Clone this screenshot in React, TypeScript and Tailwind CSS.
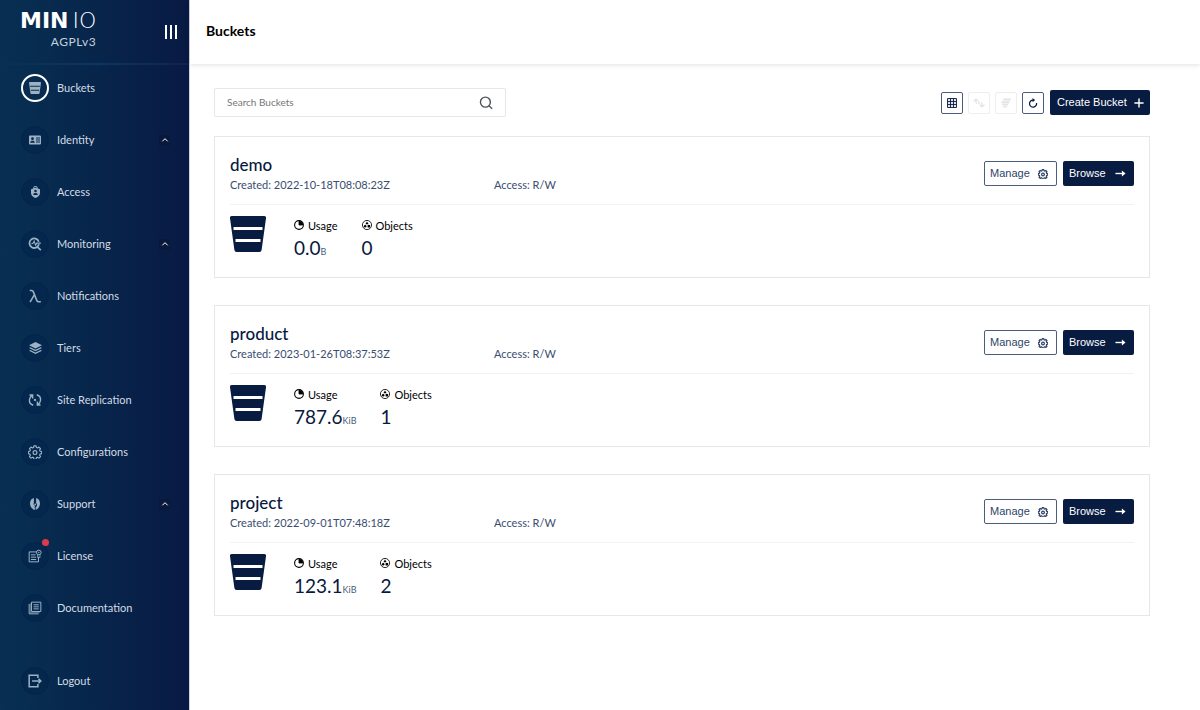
// Buckets page of the object store console: dark navigation rail on the left,
// page header, toolbar and one card per bucket on the right.

import type { ReactNode } from 'react';

interface Bucket {
    name: string;
    created: string;
    access: string;
    usage: string;
    unit: string;
    objects: number;
}

const BUCKETS: Bucket[] = [
    {
        name: 'demo',
        created: '2022-10-18T08:08:23Z',
        access: 'R/W',
        usage: '0.0',
        unit: 'B',
        objects: 0,
    },
    {
        name: 'product',
        created: '2023-01-26T08:37:53Z',
        access: 'R/W',
        usage: '787.6',
        unit: 'KiB',
        objects: 1,
    },
    {
        name: 'project',
        created: '2022-09-01T07:48:18Z',
        access: 'R/W',
        usage: '123.1',
        unit: 'KiB',
        objects: 2,
    },
];

interface IconProps {
    className?: string;
    children?: ReactNode;
}

/** 24-unit outline icon, used as the base of the line drawings below. */
function LineIcon({ className = 'size-3.5', children }: IconProps) {
    return (
        <svg
            viewBox="0 0 24 24"
            className={className}
            fill="none"
            stroke="currentColor"
            strokeWidth="2"
            aria-hidden="true"
        >
            {children}
        </svg>
    );
}

/** Solid bucket with two slots that stop just short of its sides. */
function BucketIcon({ className = 'size-3' }: IconProps) {
    return (
        <svg
            viewBox="0 0 36 36"
            className={className}
            fill="currentColor"
            fillRule="evenodd"
            aria-hidden="true"
        >
            <path d="M2 0h32a2 2 0 0 1 2 2.300L31.600 34a2.200 2.200 0 0 1-2.200 2H6.600a2.200 2.200 0 0 1-2.200-2L0 2.300A2 2 0 0 1 2 0zM3.500 11v3h29v-3zM5.500 23v3h25v-3z" />
        </svg>
    );
}

function IdentityIcon() {
    return (
        <svg
            viewBox="0 0 24 18"
            className="h-2.5 w-3"
            fill="currentColor"
            fillRule="evenodd"
            aria-hidden="true"
        >
            <path d="M2 0h20a2 2 0 0 1 2 2v14a2 2 0 0 1-2 2H2a2 2 0 0 1-2-2V2a2 2 0 0 1 2-2zM7 3.500a2.800 2.800 0 1 0 0 5.600 2.800 2.800 0 0 0 0-5.600zM2.500 14.500h9c0-3-2-4-4.500-4s-4.500 1-4.500 4zM14 4v2h8V4zM14 8v2h8V8zM14 12v2h8v-2z" />
        </svg>
    );
}

function AccessIcon() {
    return (
        <svg
            viewBox="0 0 18 24"
            className="h-3 w-[9px]"
            fill="currentColor"
            fillRule="evenodd"
            aria-hidden="true"
        >
            <path d="M4.500 5C4.500 1.500 6.500 0 9 0s4.500 1.500 4.500 5L18 6.500V14c0 5-4 8-9 10-5-2-9-5-9-10V6.500zM6.500 4.400L9 3.500l2.500.9C11.500 2.700 10.500 2 9 2s-2.500.7-2.500 2.400zM9 7.500a2.600 2.600 0 1 0 0 5.200 2.600 2.600 0 0 0 0-5.200zM4.500 18h9c0-3-2-4-4.500-4s-4.500 1-4.500 4z" />
        </svg>
    );
}

function MonitoringIcon() {
    return (
        <LineIcon>
            <path
                d="M18.700 12.500A8.200 8.200 0 1 1 18.500 8M16 17l6 5.500"
                strokeWidth="3"
            />
            <path d="M6 11h2.500l2-4 2.500 7 2-3.500h7" strokeWidth="1.800" />
        </LineIcon>
    );
}

function LambdaIcon() {
    return (
        <LineIcon>
            <path
                d="M3 2.500h3.500c1.500 0 2 .8 2.500 2l6 15c.7 1.800 1.500 2.500 3 2.500h4M11 9.500L3.500 22.500"
                strokeWidth="2.600"
            />
        </LineIcon>
    );
}

function TiersIcon() {
    return (
        <svg
            viewBox="0 0 26 24"
            className="h-3 w-[13px]"
            fill="currentColor"
            aria-hidden="true"
        >
            <path d="M13 0l13 6.500L13 13 0 6.500z" />
            <path d="M2.500 10.500L13 15.700l10.500-5.200L26 12l-13 6.500L0 12z" />
            <path d="M2.500 16L13 21.200 23.500 16l2.500 1.300L13 24 0 17.300z" />
        </svg>
    );
}

function ReplicationIcon() {
    return (
        <LineIcon>
            <path
                d="M9 21C4.500 19.500 2 16 2.500 11.500 2.800 9 4 6.500 6.500 4.500M2.500 3.500h5.500V9.500"
                strokeWidth="2.400"
            />
            <path
                d="M15 3c4.500 1.500 7 5 6.500 9.500-.3 2.500-1.500 5-4 7M21.500 20.500H16V14.500"
                strokeWidth="2.400"
            />
            <circle cx="12" cy="12" r="2" fill="currentColor" stroke="none" />
        </LineIcon>
    );
}

interface GearProps {
    className?: string;
    weight?: string;
}

function GearIcon({ className = 'size-3.5', weight = '2' }: GearProps) {
    return (
        <LineIcon className={className}>
            <path
                d="M10.100 1.500h3.800l.6 2.800 1.900.8 2.400-1.600 2.700 2.700-1.600 2.400.8 1.900 2.800.6v3.800l-2.800.6-.8 1.900 1.600 2.400-2.700 2.700-2.400-1.600-1.900.8-.6 2.800h-3.800l-.6-2.800-1.900-.8-2.400 1.600-2.700-2.700 1.600-2.400-.8-1.900-2.800-.6v-3.800l2.800-.6.8-1.900-1.600-2.400 2.700-2.700 2.400 1.600 1.900-.8z"
                strokeWidth={weight}
                strokeLinejoin="round"
            />
            <circle cx="12" cy="13" r="3.300" strokeWidth={weight} />
        </LineIcon>
    );
}

function SupportIcon() {
    return (
        <svg
            viewBox="0 0 22 26"
            className="h-3 w-2.5"
            fill="currentColor"
            aria-hidden="true"
        >
            <path d="M8.500 0v11l-1 2.500 3.500 4-1 3 1.500 4.500c-1 .8-2 1-3 .5C3.500 23 0 18 0 12 0 6 3.500 1 8.500 0z" />
            <path d="M13.500 0c5 1 8.500 6 8.500 12 0 6.500-3.500 11.500-9 13.500l-1-4.500 3-3.500.5-4-2-2.500z" />
            <circle cx="11.500" cy="14" r="2" />
        </svg>
    );
}

function LicenseIcon() {
    return (
        <LineIcon>
            <path d="M15 5H2v17h16v-8M5 10h8M5 14h9M5 18h9" strokeWidth="1.700" />
            <circle cx="18.500" cy="6" r="4" strokeWidth="1.700" />
            <path d="M16.500 10v5l2-1.300 2 1.300v-5" strokeWidth="1.300" />
            <circle cx="18.500" cy="6" r="1.200" fill="currentColor" stroke="none" />
        </LineIcon>
    );
}

function DocumentationIcon() {
    return (
        <LineIcon>
            <path
                d="M6 2h16v16H6zM2 5v17h16M9.500 6.500h9M9.500 10h9M9.500 13.500h9"
                strokeWidth="1.700"
            />
            <path d="M4 4v16h16" strokeWidth="1" />
        </LineIcon>
    );
}

function LogoutIcon() {
    return (
        <LineIcon>
            <path
                d="M17 7V2H2v20h15v-5M7 12h15M18 8l4 4-4 4"
                strokeWidth="2.600"
            />
        </LineIcon>
    );
}

interface NavEntry {
    label: string;
    icon: ReactNode;
    active?: boolean;
    expandable?: boolean;
    alert?: boolean;
}

const NAV: NavEntry[] = [
    { label: 'Buckets', icon: <BucketIcon />, active: true },
    { label: 'Identity', icon: <IdentityIcon />, expandable: true },
    { label: 'Access', icon: <AccessIcon /> },
    { label: 'Monitoring', icon: <MonitoringIcon />, expandable: true },
    { label: 'Notifications', icon: <LambdaIcon /> },
    { label: 'Tiers', icon: <TiersIcon /> },
    { label: 'Site Replication', icon: <ReplicationIcon /> },
    { label: 'Configurations', icon: <GearIcon /> },
    { label: 'Support', icon: <SupportIcon />, expandable: true },
    { label: 'License', icon: <LicenseIcon />, alert: true },
    { label: 'Documentation', icon: <DocumentationIcon /> },
];

function NavItem({ label, icon, active, expandable, alert }: NavEntry) {
    return (
        <a
            href="#"
            className="flex h-[52px] items-center gap-2 pr-[19px] pl-[21px] text-[11px] text-[#d3dce6]"
        >
            <span
                className={`relative flex size-7 items-center justify-center rounded-full text-[#9db1c4] ${
                    active
                        ? 'border-2 border-white'
                        : 'border border-[#05234a] bg-[#03274d]'
                }`}
            >
                {icon}
                {alert && (
                    <span className="absolute -top-1 -right-px size-[7px] rounded-full bg-[#dc3a4f]" />
                )}
            </span>
            <span className="flex-1">{label}</span>
            {expandable && (
                <span className="flex size-[11px] items-center justify-center bg-[#08193c] text-white">
                    <LineIcon className="size-2">
                        <path d="M4 16l8-8 8 8" strokeWidth="3" />
                    </LineIcon>
                </span>
            )}
        </a>
    );
}

function Sidebar() {
    return (
        <aside className="flex w-[190px] shrink-0 flex-col border-r border-[#cfd5de] bg-linear-to-r from-[#073052] to-[#081a44]">
            <div className="flex h-[63px] items-start justify-between pr-3 pl-5">
                <div className="flex flex-col items-end pt-[11px] text-white">
                    <div className="flex items-center gap-1 leading-5">
                        <span className="font-['DejaVu_Sans'] text-[22px] font-bold">
                            MIN
                        </span>
                        <span className="font-['DejaVu_Sans'] text-[22px] font-extralight">
                            IO
                        </span>
                    </div>
                    <span className="text-[12px] leading-[22px] tracking-wider text-[#c3d0de]">
                        AGPLv3
                    </span>
                </div>
                <button
                    type="button"
                    aria-label="Collapse menu"
                    className="mt-[25px] flex h-3.5 gap-[3px]"
                >
                    <span className="h-full w-0.5 bg-white" />
                    <span className="h-full w-0.5 bg-white" />
                    <span className="h-full w-0.5 bg-white" />
                </button>
            </div>
            <div className="h-0.5 w-full bg-linear-to-r from-[#073052] via-[#0f3562] to-[#0c2450]" />
            <nav className="-mt-[3px] flex flex-1 flex-col justify-between pb-[3px]">
                <div>
                    {NAV.map((entry) => (
                        <NavItem key={entry.label} {...entry} />
                    ))}
                </div>
                <NavItem label="Logout" icon={<LogoutIcon />} />
            </nav>
        </aside>
    );
}

interface ToolButtonProps {
    label: string;
    disabled?: boolean;
    children: ReactNode;
}

function ToolButton({ label, disabled = false, children }: ToolButtonProps) {
    return (
        <button
            type="button"
            aria-label={label}
            disabled={disabled}
            className="flex size-[22px] items-center justify-center rounded-xs border border-[#4b5c7c] text-[#081c42] disabled:border-[#eeeeee] disabled:text-[#e4e4e4]"
        >
            {children}
        </button>
    );
}

function Toolbar() {
    return (
        <div className="flex items-center justify-between">
            <label className="flex h-[29px] w-[292px] items-center rounded-xs border border-[#e5e7e9] px-3">
                <input
                    type="search"
                    placeholder="Search Buckets"
                    aria-label="Search Buckets"
                    className="min-w-0 flex-1 text-[10px] text-[#07193e] outline-none placeholder:text-[#767676]"
                />
                <LineIcon className="size-3.5 text-[#4f5257]">
                    <circle cx="11" cy="10.500" r="8.500" strokeWidth="2.400" />
                    <path d="M17 16.500l5.500 5.500" strokeWidth="2.400" />
                </LineIcon>
            </label>
            <div className="flex items-center gap-1.5">
                <div className="flex items-center gap-[5px]">
                    <ToolButton label="Select all">
                        <svg
                            viewBox="0 0 10 10"
                            className="size-2.5"
                            fill="none"
                            stroke="currentColor"
                            strokeWidth="0.900"
                            aria-hidden="true"
                        >
                            <path d="M.5.5h9v9h-9zM3.500.5v9M6.500.5v9M.5 3.500h9M.5 6.500h9" />
                            <path
                                d="M1.500 2h1M4.500 2h1M7.500 2h1M1.500 5h1M4.500 5h1M7.500 5h1M1.500 8h1M4.500 8h1M7.500 8h1"
                                opacity="0.600"
                            />
                        </svg>
                    </ToolButton>
                    <ToolButton label="Set lifecycle" disabled>
                        <LineIcon className="size-3">
                            <path
                                d="M1 9l5-5 5 5M6 4v7c0 1.500 1 2 2.500 2M13 15l5 5 5-5M18 20v-7c0-1.500-1-2-2.500-2"
                                strokeWidth="2.400"
                            />
                            <circle cx="12" cy="12" r="2" fill="currentColor" stroke="none" />
                        </LineIcon>
                    </ToolButton>
                    <ToolButton label="Set replication" disabled>
                        <svg
                            viewBox="0 0 24 24"
                            className="size-2.5"
                            fill="currentColor"
                            aria-hidden="true"
                        >
                            <path d="M5 1h19l-1 5H5.500zM1 7.500h20l-1 5H1.500zM3 14h15l-1 4H3.500zM4 19.500h11L14 23H5z" />
                        </svg>
                    </ToolButton>
                    <ToolButton label="Refresh">
                        <LineIcon className="size-2.5">
                            <path
                                d="M20.500 12A8.500 8.500 0 1 1 12 5h2"
                                strokeWidth="3"
                            />
                            <path d="M11 0l6 5-6 5z" fill="currentColor" stroke="none" />
                        </LineIcon>
                    </ToolButton>
                </div>
                <button
                    type="button"
                    className="flex h-[25px] w-[100px] items-center justify-between rounded-xs bg-[#081c42] pr-1.5 pl-[7px] font-['Liberation_Sans',sans-serif] text-[11px] text-white"
                >
                    Create Bucket
                    <LineIcon className="size-2.5">
                        <path d="M12 1v22M1 12h22" strokeWidth="3.400" />
                    </LineIcon>
                </button>
            </div>
        </div>
    );
}

function BucketCard({ name, created, access, usage, unit, objects }: Bucket) {
    return (
        <article className="border border-[#e5e7e8] px-[15px] pt-[17px] pb-[11px]">
            <div className="flex items-start justify-between border-b border-[#f1f2f2] pb-2.5">
                <div>
                    <h2 className="text-[17px] leading-[22px] font-medium text-[#07193e]">
                        {name}
                    </h2>
                    <div className="flex text-[11px] leading-[18px] text-[#3a4d70]">
                        <p className="w-[264px]">Created: {created}</p>
                        <p>Access: {access}</p>
                    </div>
                </div>
                <div className="flex gap-1.5 pt-[7px] font-['Liberation_Sans',sans-serif] text-[11px]">
                    <button
                        type="button"
                        className="flex h-[25px] w-[73px] items-center justify-between rounded-xs border border-[#4b5c7c] pr-2 pl-[5px] text-[#2f4468]"
                    >
                        Manage
                        <GearIcon className="size-2.5" weight="3" />
                    </button>
                    <button
                        type="button"
                        className="flex h-[25px] w-[71px] items-center justify-between rounded-xs bg-[#081c42] pr-2 pl-1.5 text-white"
                    >
                        Browse
                        <LineIcon className="size-[11px]">
                            <path d="M1 12h17" strokeWidth="3" />
                            <path d="M15 5.500l8 6.500-8 6.500z" fill="currentColor" stroke="none" />
                        </LineIcon>
                    </button>
                </div>
            </div>
            <div className="flex pt-[11px]">
                <BucketIcon className="size-9 text-[#081c42]" />
                <dl className="ml-7 flex gap-6 pt-0.5">
                    <div>
                        <dt className="flex items-center gap-1 text-[11px] leading-4 text-black">
                            <LineIcon className="mb-0.5 size-2.5">
                                <circle cx="12" cy="12" r="10.500" strokeWidth="2.600" />
                                <path d="M12 3v9h9a9 9 0 0 0-9-9z" fill="currentColor" />
                            </LineIcon>
                            Usage
                        </dt>
                        <dd className="text-[19px] leading-7 text-[#07193e]">
                            {usage}
                            <span className="text-[9px] text-[#4b5c7c]">{unit}</span>
                        </dd>
                    </div>
                    <div>
                        <dt className="flex items-center gap-1 text-[11px] leading-4 text-black">
                            <LineIcon className="mb-0.5 size-2.5">
                                <circle cx="12" cy="12" r="11" />
                                <path d="M12 3.500l4 6.500H8z" fill="currentColor" stroke="none" />
                                <circle cx="7.500" cy="15" r="3" fill="currentColor" stroke="none" />
                                <path d="M13.500 12h6v6h-6z" fill="currentColor" stroke="none" />
                            </LineIcon>
                            Objects
                        </dt>
                        <dd className="text-[19px] leading-7 text-[#07193e]">
                            {objects}
                        </dd>
                    </div>
                </dl>
            </div>
        </article>
    );
}

export default function App() {
    return (
        <div className="flex min-h-screen bg-white font-[Lato,sans-serif]">
            <Sidebar />
            <div className="flex min-w-0 flex-1 flex-col">
                <header className="flex h-16 items-center px-4 pb-1 shadow-[0_1px_5px_rgba(0,0,0,0.12)]">
                    <h1 className="text-[14px] font-bold text-black">Buckets</h1>
                </header>
                <main className="flex flex-col pt-6 pr-[50px] pl-6">
                    <Toolbar />
                    <div className="mt-[19px] flex flex-col gap-[27px]">
                        {BUCKETS.map((bucket) => (
                            <BucketCard key={bucket.name} {...bucket} />
                        ))}
                    </div>
                </main>
            </div>
        </div>
    );
}
